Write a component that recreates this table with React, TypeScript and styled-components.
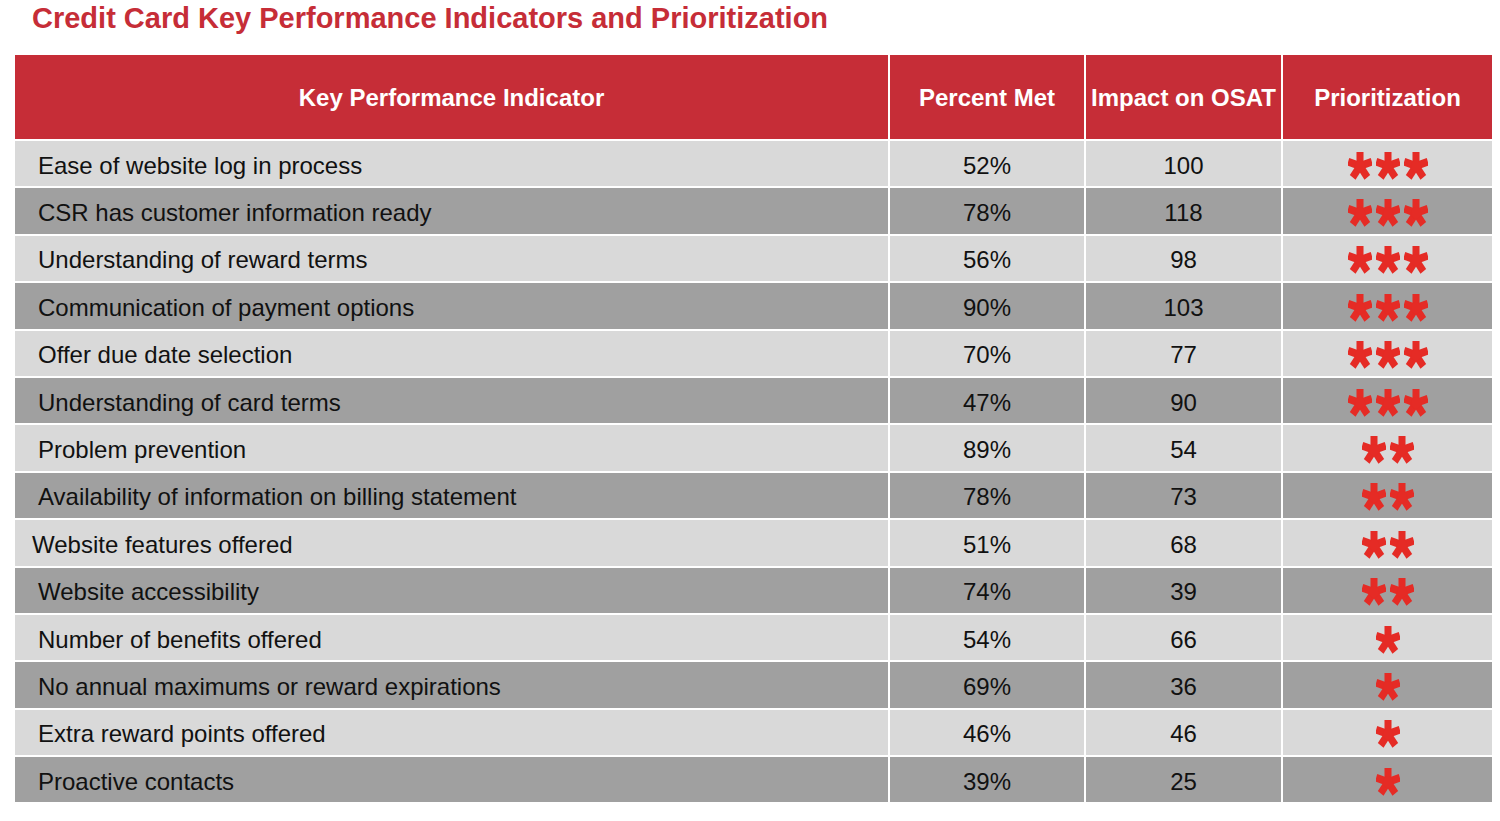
import React from 'react';
import styled, {createGlobalStyle} from 'styled-components';

const GlobalStyle = createGlobalStyle`
    body {
        margin: 0;
        background: #ffffff;
        font-family: "Liberation Sans", Arial, sans-serif;
    }
`

const Page = styled.div`
    width: 1500px;
    height: 821px;
    padding: 0 0 0 15px;
    box-sizing: border-box;
`

const Title = styled.h1`
    margin: 0;
    padding: 2px 0 0 17px;
    height: 55px;
    box-sizing: border-box;
    color: #c62d37;
    font-size: 29px;
    font-weight: 700;
    line-height: 32px;
`

const Grid = styled.div`
    display: grid;
    width: 1477px;
    grid-template-columns: 873px 194px 195px 209px;
    grid-template-rows: 84px repeat(14, 45.4px);
    gap: 2px;
    background: #ffffff;
`

const HeadCell = styled.div`
    background: #c62d37;
    color: #ffffff;
    font-size: 24px;
    font-weight: 700;
    display: flex;
    align-items: center;
    justify-content: center;
    padding-top: 2px;
    white-space: nowrap;
`

const Cell = styled.div<{ $dark: boolean; $indent?: number; $left?: boolean }>`
    background: ${p => (p.$dark ? '#a0a0a0' : '#d9d9d9')};
    color: #111111;
    font-size: 24px;
    display: flex;
    align-items: center;
    justify-content: ${p => (p.$left ? 'flex-start' : 'center')};
    padding-left: ${p => (p.$left ? `${p.$indent ?? 23}px` : '0')};
    padding-top: 4px;
    white-space: nowrap;
`

const Stars = styled.div`
    display: flex;
    gap: 4px;
`

const Star = () => (
    <svg width="24" height="28" viewBox="-13 -13.5 26 27" preserveAspectRatio="none">
        {[0, 72, 144, 216, 288].map(a => (
            <rect key={a} x="-3.8" y="-13.5" width="7.6" height="13.5" fill="#e52b25" transform={`rotate(${a})`}/>
        ))}
        <circle r="5.5" fill="#e52b25"/>
    </svg>
)

const rows: [string, string, string, number, number?][] = [
    ['Ease of website log in process', '52%', '100', 3],
    ['CSR has customer information ready', '78%', '118', 3],
    ['Understanding of reward terms', '56%', '98', 3],
    ['Communication of payment options', '90%', '103', 3],
    ['Offer due date selection', '70%', '77', 3],
    ['Understanding of card terms', '47%', '90', 3],
    ['Problem prevention', '89%', '54', 2],
    ['Availability of information on billing statement', '78%', '73', 2],
    ['Website features offered', '51%', '68', 2, 17],
    ['Website accessibility', '74%', '39', 2],
    ['Number of benefits offered', '54%', '66', 1],
    ['No annual maximums or reward expirations', '69%', '36', 1],
    ['Extra reward points offered', '46%', '46', 1],
    ['Proactive contacts', '39%', '25', 1],
]

export default function App() {
    return (
        <Page>
            <GlobalStyle/>
            <Title>Credit Card Key Performance Indicators and Prioritization</Title>
            <Grid>
                <HeadCell>Key Performance Indicator</HeadCell>
                <HeadCell>Percent Met</HeadCell>
                <HeadCell>Impact on OSAT</HeadCell>
                <HeadCell>Prioritization</HeadCell>
                {rows.map(([name, pct, impact, stars, indent], i) => {
                    const dark = i % 2 === 1
                    return (
                        <React.Fragment key={name}>
                            <Cell $dark={dark} $left $indent={indent}>{name}</Cell>
                            <Cell $dark={dark}>{pct}</Cell>
                            <Cell $dark={dark}>{impact}</Cell>
                            <Cell $dark={dark}>
                                <Stars>
                                    {Array.from({length: stars}).map((_, k) => <Star key={k}/>)}
                                </Stars>
                            </Cell>
                        </React.Fragment>
                    )
                })}
            </Grid>
        </Page>
    )
}
